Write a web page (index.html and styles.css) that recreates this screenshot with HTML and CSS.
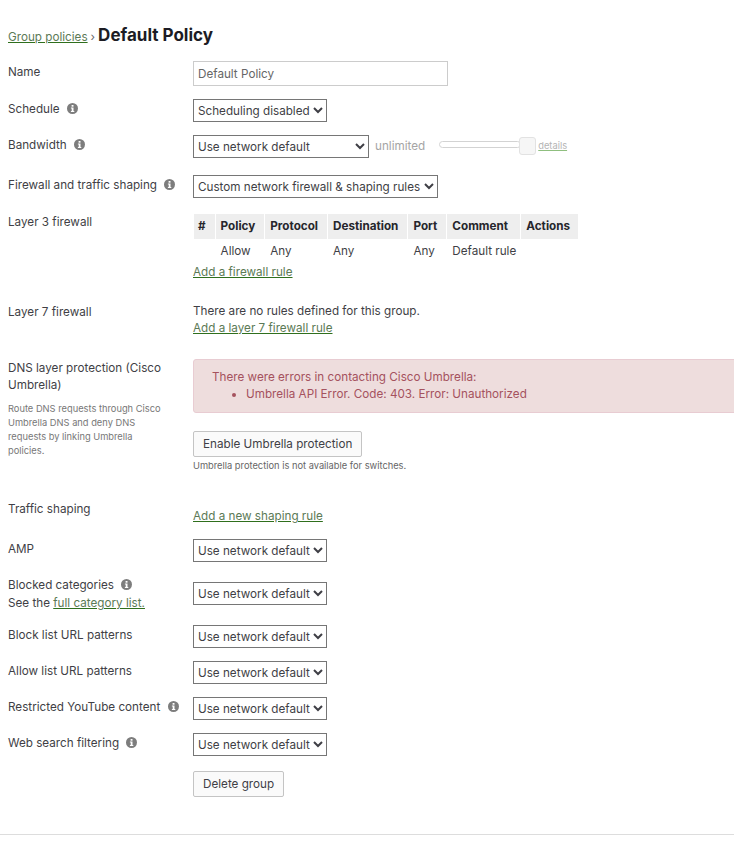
FILE: index.html
```html
<!DOCTYPE html>
<html lang="en">
<head>
    <meta charset="UTF-8">
    <title>Default Policy - Group policies</title>
    <link rel="stylesheet" href="styles.css">
</head>
<body>
    <svg class="icon-defs" width="0" height="0">
        <symbol id="info" viewBox="0 0 11 11">
            <circle cx="5.5" cy="5.5" r="5.5" fill="#7d7d7d"/>
            <rect x="4.6" y="2" width="1.9" height="1.7" fill="#fff"/>
            <path d="M3.9 4.6h2.6v3.4h.8v1H3.9V8h.8V5.6h-.8z" fill="#fff"/>
        </symbol>
    </svg>

    <div class="page">
        <h1 class="title"><a href="#" class="crumb">Group policies</a><span class="sep">›</span>Default Policy</h1>

        <div class="row row-name">
            <div class="label">Name</div>
            <div class="field"><input class="text-input" type="text" value="Default Policy"></div>
        </div>

        <div class="row row-schedule">
            <div class="label">Schedule <svg class="info"><use href="#info"/></svg></div>
            <div class="field">
                <select><option>Scheduling disabled</option></select>
            </div>
        </div>

        <div class="row row-bandwidth">
            <div class="label">Bandwidth <svg class="info"><use href="#info"/></svg></div>
            <div class="field bandwidth">
                <select class="bandwidth-select"><option>Use network default</option></select>
                <span class="unlimited">unlimited</span>
                <div class="slider"><div class="slider-handle"></div></div>
                <a href="#" class="details">details</a>
            </div>
        </div>

        <div class="row row-shaping">
            <div class="label">Firewall and traffic shaping <svg class="info"><use href="#info"/></svg></div>
            <div class="field">
                <select><option>Custom network firewall &amp; shaping rules</option></select>
            </div>
        </div>

        <div class="row row-l3">
            <div class="label">Layer 3 firewall</div>
            <div class="field">
                <table class="rules">
                    <thead>
                        <tr><th>#</th><th>Policy</th><th>Protocol</th><th>Destination</th><th>Port</th><th>Comment</th><th>Actions</th></tr>
                    </thead>
                    <tbody>
                        <tr><td></td><td>Allow</td><td>Any</td><td>Any</td><td>Any</td><td>Default rule</td><td></td></tr>
                    </tbody>
                </table>
                <a href="#">Add a firewall rule</a>
            </div>
        </div>

        <div class="row row-l7">
            <div class="label">Layer 7 firewall</div>
            <div class="field">
                <div>There are no rules defined for this group.</div>
                <a href="#">Add a layer 7 firewall rule</a>
            </div>
        </div>

        <div class="row row-dns">
            <div class="label">
                DNS layer protection (Cisco Umbrella)
                <p class="hint">Route DNS requests through Cisco Umbrella DNS and deny DNS requests by linking Umbrella policies.</p>
            </div>
            <div class="field">
                <div class="alert">
                    There were errors in contacting Cisco Umbrella:
                    <ul><li>Umbrella API Error. Code: 403. Error: Unauthorized</li></ul>
                </div>
                <button class="btn">Enable Umbrella protection</button>
                <div class="note">Umbrella protection is not available for switches.</div>
            </div>
        </div>

        <div class="row row-traffic">
            <div class="label">Traffic shaping</div>
            <div class="field traffic-link"><a href="#">Add a new shaping rule</a></div>
        </div>

        <div class="row row-amp">
            <div class="label">AMP</div>
            <div class="field"><select><option>Use network default</option></select></div>
        </div>

        <div class="row row-blocked">
            <div class="label">
                Blocked categories <svg class="info"><use href="#info"/></svg>
                <div>See the <a href="#">full category list.</a></div>
            </div>
            <div class="field blocked-field"><select><option>Use network default</option></select></div>
        </div>

        <div class="row row-blocklist">
            <div class="label">Block list URL patterns</div>
            <div class="field"><select><option>Use network default</option></select></div>
        </div>

        <div class="row row-tight">
            <div class="label">Allow list URL patterns</div>
            <div class="field"><select><option>Use network default</option></select></div>
        </div>

        <div class="row row-tight">
            <div class="label">Restricted YouTube content <svg class="info"><use href="#info"/></svg></div>
            <div class="field"><select><option>Use network default</option></select></div>
        </div>

        <div class="row row-tight">
            <div class="label">Web search filtering <svg class="info"><use href="#info"/></svg></div>
            <div class="field"><select><option>Use network default</option></select></div>
        </div>

        <div class="row row-delete">
            <div class="label"></div>
            <div class="field"><button class="btn">Delete group</button></div>
        </div>
    </div>

    <hr class="footer-line">
</body>
</html>
```

FILE: styles.css
```css
* {
    box-sizing: border-box;
}

html, body {
    margin: 0;
    padding: 0;
}

body {
    font-family: Inter, "Liberation Sans", sans-serif;
    font-size: 11.7px;
    line-height: 17px;
    color: #3f3f46;
    background: white;
    overflow-x: hidden;
}

.icon-defs {
    position: absolute;
}

.page {
    padding: 24px 0 0 8px;
}

a {
    color: #5c7a56;
    text-decoration: underline;
    text-decoration-color: #2f6f1d;
}

.title {
    margin: 0;
    font-size: 17px;
    line-height: 22px;
    font-weight: 700;
    color: #1c1c24;
}

.crumb {
    font-size: 11.7px;
    font-weight: 400;
}

.sep {
    font-size: 11.7px;
    font-weight: 400;
    color: #666;
    margin: 0 3px;
}

.row {
    display: flex;
    align-items: flex-start;
}

.label {
    width: 185px;
    flex: none;
    padding: 2px 5px 0 0;
}

.field {
    flex: 1;
    min-width: 0;
}

.info {
    width: 11px;
    height: 11px;
    margin-left: 4px;
    vertical-align: -1px;
}

select {
    display: block;
    font-family: inherit;
    font-size: 11.7px;
    height: 23px;
    padding: 0;
    color: #3f3f46;
    background: white;
    border: 1px solid #767676;
    border-radius: 0;
}

.text-input {
    display: block;
    width: 255px;
    height: 25px;
    padding: 0 4px;
    font-family: inherit;
    font-size: 11.7px;
    color: #666;
    border: 1px solid #ccc;
    border-radius: 0;
}

.btn {
    display: block;
    height: 26px;
    padding: 0 9px;
    font-family: inherit;
    font-size: 11.7px;
    color: #3f3f46;
    background: #fafafa;
    border: 1px solid #c4c4c4;
    border-radius: 2px;
}

.row-name {
    margin-top: 13px;
}

.row-name .label {
    padding-top: 3px;
}

.row-schedule {
    margin-top: 13px;
}

.row-bandwidth {
    margin-top: 13px;
}

.row-shaping {
    margin-top: 17px;
}

.row-l3 {
    margin-top: 16px;
}

.row-l3 .label {
    padding-top: 0;
}

.bandwidth {
    display: flex;
    align-items: center;
}

.bandwidth-select {
    width: 176px;
}

.unlimited {
    margin-left: 6px;
    color: #a5a5a5;
}

.slider {
    position: relative;
    width: 82px;
    height: 7px;
    margin: -5px 0 0 14px;
    border: 1px solid #d3d3d3;
    border-radius: 4px;
}

.slider-handle {
    position: absolute;
    top: -5px;
    right: -16px;
    width: 17px;
    height: 18px;
    background: #f6f6f6;
    border: 1px solid #e2e2e2;
    border-radius: 3px;
}

.details {
    margin: -3px 0 0 17px;
    font-size: 9.3px;
    color: #b4b4b4;
    text-decoration-color: #8fbf7f;
}

.rules {
    border-collapse: separate;
    border-spacing: 1px 0;
    margin-bottom: 1px;
}

.rules th {
    height: 25px;
    padding: 0 9px 0 5px;
    text-align: left;
    font-weight: 700;
    color: #26262c;
    background: #eeeeee;
}

.rules th:first-child {
    padding-left: 4px;
}

.rules th:last-child {
    padding-right: 8px;
}

.rules td {
    height: 24px;
    padding: 0 4px 0 5px;
}

.row-l7 {
    margin-top: 22px;
}

.row-l7 .label,
.row-dns .label,
.row-traffic .label,
.row-blocked .label {
    padding-top: 1px;
}

.row-dns {
    margin-top: 22px;
}

.hint {
    margin: 8px 0 0;
    padding-right: 20px;
    font-size: 9.3px;
    line-height: 14px;
    color: #777;
}

.alert {
    width: 560px;
    height: 54px;
    padding: 9px 18px;
    color: #a5525e;
    background: #eedddd;
    border: 1px solid #e8ccd2;
    border-radius: 3px;
    margin-bottom: 18px;
}

.alert ul {
    margin: 0;
    padding-left: 34px;
}

.note {
    margin-top: 2px;
    font-size: 9.3px;
    line-height: 14px;
    color: #666;
}

.row-traffic {
    margin-top: 27px;
}

.traffic-link {
    padding-top: 8px;
}

.row-amp {
    margin-top: 14px;
}

.row-blocked {
    margin-top: 14px;
}

.blocked-field {
    padding-top: 6px;
}

.row-blocked .label > div {
    margin-top: 1px;
}

.row-blocklist {
    margin-top: 13px;
}

.row-tight {
    margin-top: 13px;
}

.row-delete {
    margin-top: 15px;
}

.footer-line {
    margin: 37px 0 0;
    border: 0;
    border-top: 1px solid #dddddd;
}
```
